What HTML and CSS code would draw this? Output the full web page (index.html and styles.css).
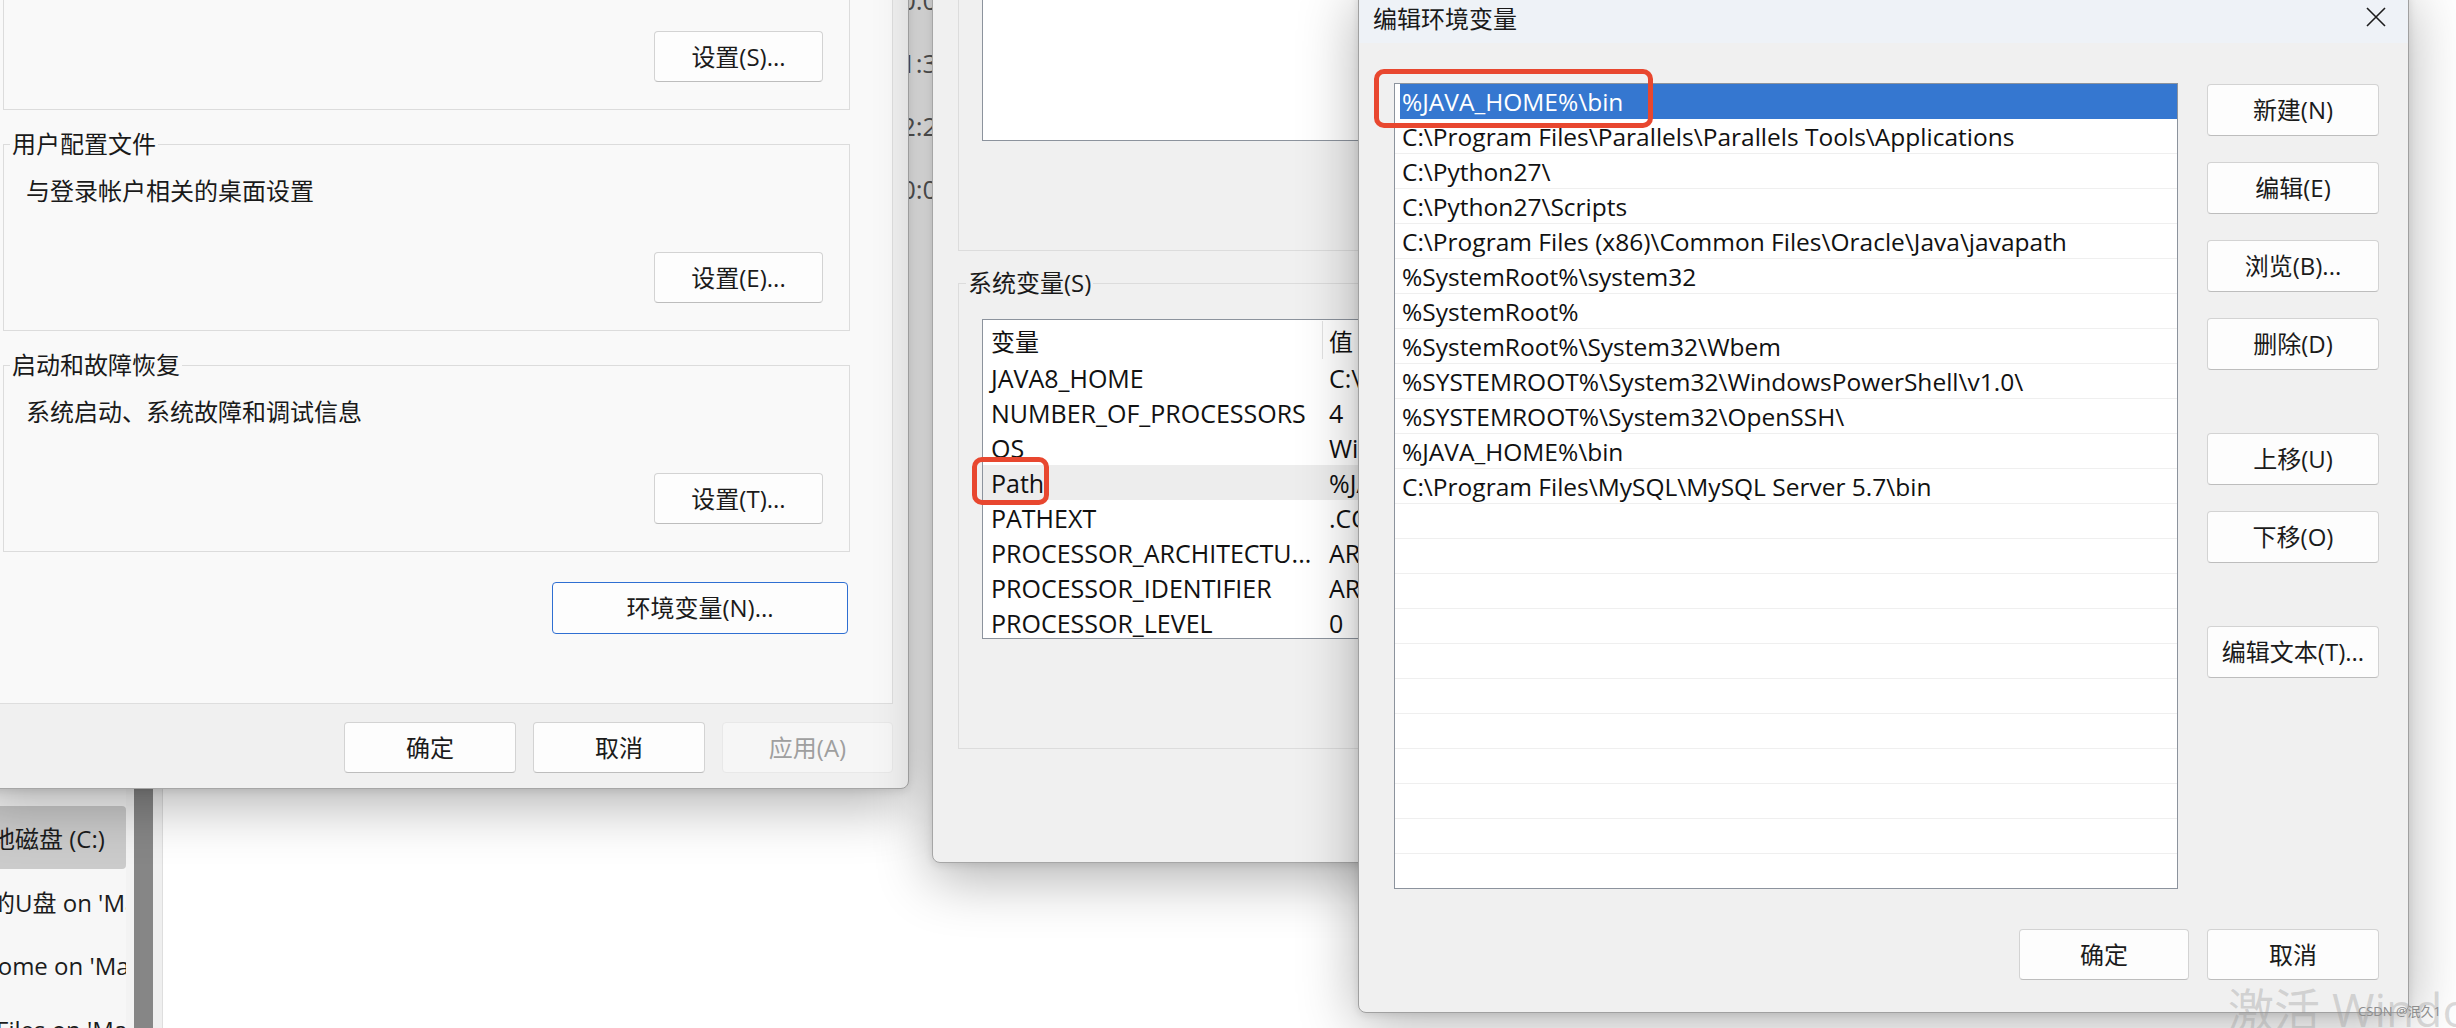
FILE: index.html
```html
<!DOCTYPE html>
<html lang="zh-CN">
<head>
<meta charset="utf-8">
<title>编辑环境变量</title>
<link rel="stylesheet" href="styles.css">
</head>
<body>
<div class="explorer">
  <nav class="nav">
    <div class="nav-item">快速访问</div>
    <div class="nav-item">桌面</div>
    <div class="nav-item">下载</div>
    <div class="nav-item">文档</div>
    <div class="nav-item">图片</div>
    <div class="nav-item">音乐</div>
    <div class="nav-item">视频</div>
    <div class="nav-item">OneDrive</div>
    <div class="nav-item">此电脑</div>
    <div class="nav-item">3D 对象</div>
    <div class="nav-item">视频</div>
    <div class="nav-item">图片</div>
    <div class="nav-item selected">本地磁盘 (C:)</div>
    <div class="nav-item">我的U盘 on 'Mac'</div>
    <div class="nav-item shift">Home on 'Mac'</div>
    <div class="nav-item shift-more">Files on 'Mac'</div>
  </nav>
  <div class="nav-gap"></div>
  <div class="nav-scroll"></div>
  <div class="nav-edge"></div>
  <div class="explorer-main">
    <div class="date-col">
      <div class="date-row">2023/6/8 10:02</div>
      <div class="date-row">2023/6/8 11:35</div>
      <div class="date-row">2023/6/8 12:24</div>
      <div class="date-row">2023/6/8 10:05</div>
    </div>
  </div>
</div>

<div class="sysprop">
  <div class="tabpage">
    <fieldset class="group">
      <legend>性能</legend>
      <p class="group-desc">视觉效果，处理器计划，内存使用，以及虚拟内存</p>
      <div class="group-actions"><button class="btn btn-set">设置(S)...</button></div>
    </fieldset>
    <fieldset class="group">
      <legend>用户配置文件</legend>
      <p class="group-desc">与登录帐户相关的桌面设置</p>
      <div class="group-actions"><button class="btn btn-set">设置(E)...</button></div>
    </fieldset>
    <fieldset class="group">
      <legend>启动和故障恢复</legend>
      <p class="group-desc">系统启动、系统故障和调试信息</p>
      <div class="group-actions"><button class="btn btn-set">设置(T)...</button></div>
    </fieldset>
    <div class="env-row"><button class="btn btn-env">环境变量(N)...</button></div>
  </div>
  <div class="dlg-footer">
    <button class="btn btn-foot">确定</button>
    <button class="btn btn-foot">取消</button>
    <button class="btn btn-foot disabled">应用(A)</button>
  </div>
</div>

<div class="envvars">
  <fieldset class="vgroup vgroup-user">
    <legend>Administrator 的用户变量(U)</legend>
    <div class="listbox user-list"></div>
    <div class="vgroup-actions">
      <button class="btn">新建(N)...</button>
      <button class="btn">编辑(E)...</button>
      <button class="btn">删除(D)</button>
    </div>
  </fieldset>
  <fieldset class="vgroup">
    <legend>系统变量(S)</legend>
    <div class="listbox sys-list">
      <div class="lv-row lv-head"><div>变量</div><div>值</div></div>
      <div class="lv-row"><div>JAVA8_HOME</div><div>C:\Program Files\Java\jdk1.8.0_351</div></div>
      <div class="lv-row"><div>NUMBER_OF_PROCESSORS</div><div>4</div></div>
      <div class="lv-row"><div>OS</div><div>Windows_NT</div></div>
      <div class="lv-row hover"><div>Path</div><div>%JAVA_HOME%\bin;C:\Program Files\Parallels\Parallels Tools\Applications</div></div>
      <div class="lv-row"><div>PATHEXT</div><div>.COM;.EXE;.BAT;.CMD;.VBS;.VBE;.JS;.JSE;.WSF;.WSH;.MSC</div></div>
      <div class="lv-row"><div>PROCESSOR_ARCHITECTU...</div><div>ARM64</div></div>
      <div class="lv-row"><div>PROCESSOR_IDENTIFIER</div><div>ARMv8 (64-bit) Family 8</div></div>
      <div class="lv-row"><div>PROCESSOR_LEVEL</div><div>0</div></div>
    </div>
    <div class="vgroup-actions">
      <button class="btn">新建(W)...</button>
      <button class="btn">编辑(I)...</button>
      <button class="btn">删除(L)</button>
    </div>
  </fieldset>
  <div class="env-footer">
    <button class="btn">确定</button>
    <button class="btn">取消</button>
  </div>
</div>

<div class="editenv">
  <div class="titlebar">
    <span class="title">编辑环境变量</span>
    <svg class="close" viewBox="0 0 20 20" aria-hidden="true"><path d="M1 1 L19 19 M19 1 L1 19" stroke="#1c1c1c" stroke-width="1.6" fill="none"/></svg>
  </div>
  <div class="editenv-body">
    <div class="editenv-main">
      <div class="pathlist">
        <div class="path-row selected">%JAVA_HOME%\bin</div>
        <div class="path-row">C:\Program Files\Parallels\Parallels Tools\Applications</div>
        <div class="path-row">C:\Python27\</div>
        <div class="path-row">C:\Python27\Scripts</div>
        <div class="path-row">C:\Program Files (x86)\Common Files\Oracle\Java\javapath</div>
        <div class="path-row">%SystemRoot%\system32</div>
        <div class="path-row">%SystemRoot%</div>
        <div class="path-row">%SystemRoot%\System32\Wbem</div>
        <div class="path-row">%SYSTEMROOT%\System32\WindowsPowerShell\v1.0\</div>
        <div class="path-row">%SYSTEMROOT%\System32\OpenSSH\</div>
        <div class="path-row">%JAVA_HOME%\bin</div>
        <div class="path-row">C:\Program Files\MySQL\MySQL Server 5.7\bin</div>
        <div class="path-row"></div>
        <div class="path-row"></div>
        <div class="path-row"></div>
        <div class="path-row"></div>
        <div class="path-row"></div>
        <div class="path-row"></div>
        <div class="path-row"></div>
        <div class="path-row"></div>
        <div class="path-row"></div>
        <div class="path-row"></div>
        <div class="path-row"></div>
      </div>
      <div class="side-buttons">
        <button class="btn">新建(N)</button>
        <button class="btn">编辑(E)</button>
        <button class="btn">浏览(B)...</button>
        <button class="btn">删除(D)</button>
        <button class="btn group-start">上移(U)</button>
        <button class="btn">下移(O)</button>
        <button class="btn group-start">编辑文本(T)...</button>
      </div>
    </div>
    <div class="editenv-footer">
      <button class="btn btn-ok">确定</button>
      <button class="btn btn-cancel">取消</button>
    </div>
  </div>
</div>

<div class="mark mark-path"></div>
<div class="mark mark-java"></div>

<div class="watermark">激活 Windows</div>
<div class="csdn">CSDN @泯久1</div>
</body>
</html>
```

FILE: styles.css
```css
* { box-sizing: border-box; }
html, body { margin: 0; padding: 0; }
body {
  width: 2456px;
  height: 1028px;
  overflow: hidden;
  position: relative;
  background: #fff;
  font-family: "Open Sans", "Noto Sans CJK SC", sans-serif;
  font-size: 24px;
  color: #1a1a1a;
}
button { font: inherit; color: inherit; margin: 0; cursor: default; }

/* ---------- explorer window behind ---------- */
.explorer {
  position: absolute;
  left: 0;
  top: 0;
  width: 2456px;
  height: 1028px;
  display: flex;
  background: #fff;
}
.nav {
  width: 126px;
  flex: none;
  background: #f7f7f7;
  overflow: hidden;
  padding-top: 38px;
}
.nav-item {
  height: 63px;
  margin: 0 0 1px -33px;
  display: flex;
  align-items: center;
  white-space: nowrap;
  color: #1c1c1c;
}
.nav-item.shift { margin-left: -20px; }
.nav-item.shift-more { margin-left: -4px; }
.nav-item.selected { background: #cbcbcb; border-radius: 4px; }
.nav-gap { width: 8px; flex: none; background: #f3f3f3; }
.nav-scroll { width: 19px; flex: none; background: #868686; }
.nav-edge { width: 10px; flex: none; background: #efefef; border-right: 1px solid #dedede; }
.explorer-main { flex: 1; background: #fff; overflow: hidden; }
.date-col { margin: -32px 0 0 608px; width: 170px; overflow: hidden; color: #5a5a5a; font-size: 26px; }
.date-row { height: 63px; display: flex; align-items: center; white-space: nowrap; }

/* ---------- shared ---------- */
.btn {
  height: 51px;
  display: flex;
  align-items: center;
  justify-content: center;
  padding: 0;
  background: #fdfdfd;
  border: 1px solid #d3d3d3;
  border-bottom-color: #bdbdbd;
  border-radius: 4px;
  line-height: 1;
  color: #1b1b1b;
  white-space: nowrap;
}
.btn.disabled { background: #f6f6f6; border-color: #e8e8e8; color: #9f9f9f; }

/* ---------- System properties ---------- */
.sysprop {
  position: absolute;
  left: -24px;
  top: -130px;
  width: 933px;
  height: 919px;
  display: flex;
  flex-direction: column;
  background: #f0f0f0;
  border: 1px solid #a6a6a6;
  border-radius: 8px;
  box-shadow: 0 16px 56px rgba(0, 0, 0, 0.3), 0 2px 8px rgba(0, 0, 0, 0.1);
}
.tabpage {
  margin: 10px 15px 0;
  background: #f9f9f9;
  border: 1px solid #dedede;
  padding: 27px 42px 69px 10px;
  display: flex;
  flex-direction: column;
}
.group {
  margin: 0 0 20px;
  padding: 0 26px 27px 22px;
  border: 1px solid #dcdcdc;
  min-width: 0;
}
.group legend { padding: 0 2px; margin-left: -16px; line-height: 28px; }
.group-desc { margin: 17px 0 0; line-height: 32px; white-space: nowrap; }
.group-actions { margin-top: 45px; display: flex; justify-content: flex-end; }
.btn-set { width: 169px; }
.env-row { margin-top: 10px; display: flex; justify-content: flex-end; padding-right: 2px; }
.btn-env { width: 296px; height: 52px; border: 1px solid #2f6fd2; }
.dlg-footer {
  flex: 1;
  display: flex;
  justify-content: flex-end;
  align-items: flex-start;
  gap: 17px;
  padding: 18px 15px 0 0;
}
.btn-foot { width: 172px; }
.btn-foot.disabled { width: 171px; }

/* ---------- Environment variables ---------- */
.envvars {
  position: absolute;
  left: 932px;
  top: -230px;
  width: 1300px;
  height: 1093px;
  background: #f0f0f0;
  border: 1px solid #a6a6a6;
  border-radius: 8px;
  box-shadow: 0 16px 56px rgba(0, 0, 0, 0.3), 0 2px 8px rgba(0, 0, 0, 0.1);
  padding: 20px 24px 0 25px;
}
.vgroup {
  margin: 0 0 18px;
  padding: 0 23px 41px 23px;
  border: 1px solid #dcdcdc;
  min-width: 0;
}
.vgroup legend { padding: 0 2px; margin-left: -16px; line-height: 28px; }
.listbox {
  margin-top: 22px;
  background: #fff;
  border: 1px solid #8c939d;
  overflow: hidden;
}
.user-list { height: 300px; }
.sys-list { height: 320px; }
.vgroup-actions { margin-top: 17px; display: flex; justify-content: flex-end; gap: 18px; }
.vgroup-actions .btn, .env-footer .btn { width: 172px; }
.env-footer { display: flex; justify-content: flex-end; gap: 18px; padding-right: 2px; }
.lv-row {
  display: grid;
  grid-template-columns: 340px 1fr;
  height: 35px;
  align-items: center;
  white-space: nowrap;
  font-size: 25px;
  color: #111;
}
.lv-row > div { padding-left: 8px; overflow: hidden; }
.lv-row > div + div { padding-left: 6px; }
.lv-head { height: 40px; font-size: 24px; }
.lv-head > div:first-child {
  height: 38px;
  display: flex;
  align-items: center;
  border-right: 1px solid #e3e3e3;
}
.lv-row.hover { background: #ededed; }

/* ---------- Edit environment variable ---------- */
.editenv {
  position: absolute;
  left: 1358px;
  top: -10px;
  width: 1051px;
  height: 1023px;
  display: flex;
  flex-direction: column;
  background: #f0f0f0;
  border: 1px solid #a0a0a0;
  border-radius: 8px;
  box-shadow: 0 10px 60px rgba(0, 0, 0, 0.3), 0 2px 8px rgba(0, 0, 0, 0.1);
  overflow: hidden;
}
.titlebar {
  height: 52px;
  flex: none;
  display: flex;
  align-items: center;
  justify-content: space-between;
  padding: 0 22px 0 14px;
  background: #eef2f7;
}
.title { font-size: 24px; color: #1a1a1a; }
.close { width: 20px; height: 20px; display: block; }
.editenv-body {
  flex: 1;
  display: flex;
  flex-direction: column;
  padding: 40px 29px 0 35px;
}
.editenv-main { display: flex; gap: 29px; }
.pathlist {
  flex: 1;
  height: 806px;
  background: #fff;
  border: 1px solid #8c939d;
  overflow: hidden;
}
.path-row {
  height: 35px;
  border-bottom: 1px solid #efefef;
  display: flex;
  align-items: center;
  padding-left: 7px;
  white-space: nowrap;
  font-size: 24.5px;
  color: #111;
}
.path-row.selected {
  margin-left: 5px;
  padding-left: 2px;
  background: #3577d0;
  border-bottom-color: #3577d0;
  color: #fff;
}
.side-buttons {
  width: 172px;
  flex: none;
  display: flex;
  flex-direction: column;
  gap: 26px;
  padding-top: 1px;
}
.side-buttons .btn { height: 52px; }
.side-buttons .group-start { margin-top: 37px; }
.editenv-footer { margin-top: 40px; display: flex; justify-content: flex-end; gap: 18px; }
.btn-ok { width: 170px; }
.btn-cancel { width: 172px; }

/* ---------- annotations ---------- */
.mark {
  position: absolute;
  border: 5px solid #e8472f;
  border-radius: 10px;
}
.mark-path { left: 972px; top: 457px; width: 77px; height: 48px; }
.mark-java { left: 1374px; top: 69px; width: 279px; height: 59px; }

.watermark {
  position: absolute;
  left: 2228px;
  top: 982px;
  font-size: 46px;
  line-height: 1.2;
  white-space: nowrap;
  color: rgba(150, 150, 150, 0.35);
}
.csdn {
  position: absolute;
  left: 2358px;
  top: 1001px;
  font-size: 13px;
  color: #8d8d8d;
  white-space: nowrap;
}
```
